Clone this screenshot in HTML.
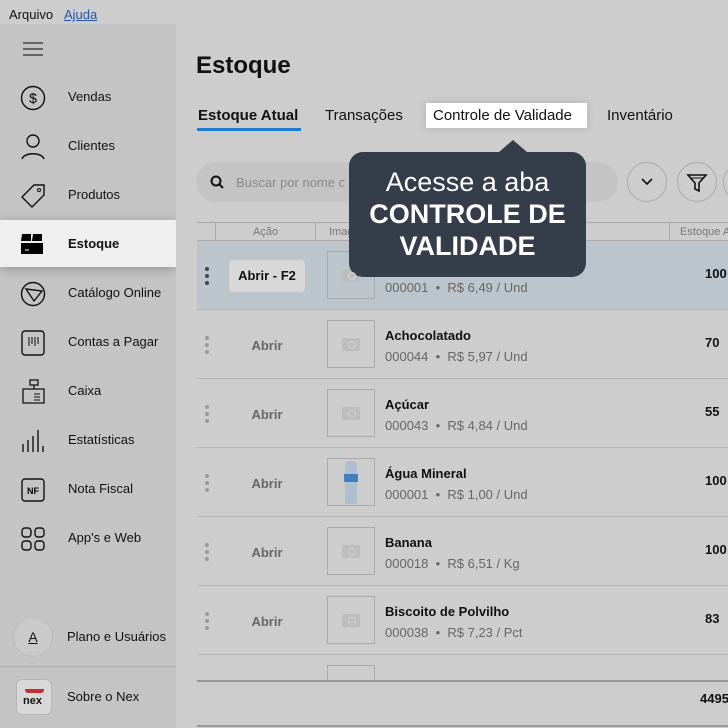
<!DOCTYPE html>
<html><head><meta charset="utf-8"><style>
*{box-sizing:border-box;margin:0;padding:0}
body{width:728px;height:728px;overflow:hidden;background:#cdcdcd;font-family:"Liberation Sans",sans-serif;color:#111;position:relative}
.abs{position:absolute}
.menubar{left:0;top:0;width:728px;height:24px;background:#cdcdcd;font-size:13px}
.side{left:0;top:24px;width:176px;height:704px;background:#c4c4c4}
.nav{position:absolute;left:0;width:176px;height:40px;font-size:13px}
.nav span{position:absolute;left:68px;top:12px}
.nav svg{position:absolute;left:20px;top:8px}
.hl{background:#efefef;box-shadow:0 2px 10px rgba(0,0,0,.25)}
.main{left:176px;top:24px;width:552px;height:704px;background:#cdcdcd}
.tab{position:absolute;top:107px;font-size:15px}
.row{position:absolute;left:197px;width:531px;height:69px;border-bottom:1px solid #b5b5b5}
.dots{position:absolute;left:8px;top:26px;width:4px}
.dots i{display:block;width:4px;height:4px;border-radius:2px;background:#9a9a9a;margin-bottom:3px}
.abrir{position:absolute;left:32px;top:20px;width:104px;height:32px;line-height:32px;text-align:center;font-size:13px;color:#666;font-weight:bold}
.img{position:absolute;left:130px;top:10px;width:48px;height:48px;border:1px solid #aaa}
.img.cam::after{content:"";position:absolute;left:14px;top:17px;width:18px;height:13px;border-radius:2px;background:#bdbdbd}
.img.cam::before{content:"";position:absolute;left:20px;top:20px;width:6px;height:6px;border-radius:50%;border:1.5px solid #d4d4d4;z-index:1}
.nm{position:absolute;left:188px;top:18px;font-size:13px;font-weight:bold}
.sub{position:absolute;left:188px;top:39px;font-size:13px;color:#666}
.qty{position:absolute;left:508px;top:25px;font-size:13px;font-weight:bold}
</style></head><body>
<div class="abs menubar"><span class="abs" style="left:9px;top:7px">Arquivo</span><span class="abs" style="left:64px;top:7px;color:#2a56a8;text-decoration:underline">Ajuda</span></div>
<div class="abs side">
<svg class="abs" style="left:23px;top:18px" width="20" height="14"><path d="M0 1h20M0 7h20M0 13h20" stroke="#444" stroke-width="1.5"/></svg>
<div class="nav" style="top:53px"><svg width="26" height="26"><circle cx="13" cy="13" r="11.5" fill="none" stroke="#111" stroke-width="1.4"/><text x="13" y="18" font-size="14" text-anchor="middle" font-family="Liberation Sans">$</text></svg><span>Vendas</span></div>
<div class="nav" style="top:102px"><svg width="26" height="26"><circle cx="13" cy="7" r="6" fill="none" stroke="#111" stroke-width="1.4"/><path d="M2 25c2-7 20-7 22 0" fill="none" stroke="#111" stroke-width="1.4"/></svg><span>Clientes</span></div>
<div class="nav" style="top:151px"><svg width="26" height="26"><path d="M2 14L14 2h10v10L12 24z" fill="none" stroke="#111" stroke-width="1.4"/><circle cx="19" cy="7" r="1.5" fill="none" stroke="#111"/></svg><span>Produtos</span></div>
<div class="nav hl" style="top:196px;height:47px"><svg style="top:12px" width="24" height="24"><path d="M2 2h9v7H1zM13 2h9v7h-10z M1 11h22v11H1z" fill="#000"/><path d="M5 18h4" stroke="#fff" stroke-width="1"/></svg><span style="top:16px;font-weight:bold">Estoque</span></div>
<div class="nav" style="top:249px"><svg width="26" height="26"><circle cx="13" cy="13" r="11.5" fill="none" stroke="#111" stroke-width="1.4"/><path d="M6 8l16 2-8 10z" fill="none" stroke="#111" stroke-width="1.4"/></svg><span>Catálogo Online</span></div>
<div class="nav" style="top:298px"><svg width="26" height="26"><rect x="2" y="1" width="22" height="24" rx="3" fill="none" stroke="#111" stroke-width="1.4"/><path d="M9 7v9M12 7v7M15 7v9M18 7v7" stroke="#111"/></svg><span>Contas a Pagar</span></div>
<div class="nav" style="top:347px"><svg width="26" height="26"><rect x="10" y="1" width="8" height="5" fill="none" stroke="#111" stroke-width="1.3"/><path d="M14 6v4M3 10h21v14H3z" fill="none" stroke="#111" stroke-width="1.3"/><path d="M14 15h6M14 18h6M14 21h6" stroke="#111"/></svg><span>Caixa</span></div>
<div class="nav" style="top:396px"><svg width="26" height="26"><path d="M3 24v-8M8 24v-12M13 24V8M18 24V2M23 24v-6" stroke="#111" stroke-width="1.4"/></svg><span>Estatísticas</span></div>
<div class="nav" style="top:445px"><svg width="26" height="26"><rect x="2" y="2" width="22" height="22" rx="3" fill="none" stroke="#111" stroke-width="1.4"/><text x="13" y="17" font-size="9" font-weight="bold" text-anchor="middle" font-family="Liberation Sans">NF</text></svg><span>Nota Fiscal</span></div>
<div class="nav" style="top:494px"><svg width="26" height="26"><rect x="2" y="2" width="9" height="9" rx="3" fill="none" stroke="#111" stroke-width="1.4"/><rect x="15" y="2" width="9" height="9" rx="3" fill="none" stroke="#111" stroke-width="1.4"/><rect x="2" y="15" width="9" height="9" rx="3" fill="none" stroke="#111" stroke-width="1.4"/><rect x="15" y="15" width="9" height="9" rx="3" fill="none" stroke="#111" stroke-width="1.4"/></svg><span>App's e Web</span></div>
<div class="abs" style="left:13px;top:593px;width:40px;height:40px;border-radius:20px;background:#cacaca;border:1px solid #bbb;text-align:center;line-height:38px;font-size:14px;text-decoration:underline">A</div>
<span class="abs" style="left:67px;top:605px;font-size:13px">Plano e Usuários</span>
<div class="abs" style="left:0;top:642px;width:176px;border-top:1px solid #aaa"></div>
<div class="abs" style="left:16px;top:655px;width:36px;height:36px;border-radius:6px;background:#d8d8d8;border:1px solid #b5b5b5"><div class="abs" style="left:8px;top:9px;width:19px;height:4px;background:#c4303a;border-radius:0 0 3px 3px"></div><span class="abs" style="left:6px;top:15px;font-size:11px;font-weight:bold">nex</span></div>
<span class="abs" style="left:67px;top:665px;font-size:13px">Sobre o Nex</span>
</div>
<div class="abs main"></div>
<div class="abs" style="left:196px;top:52px;font-size:24px;font-weight:bold">Estoque</div>
<div class="tab" style="left:198px;font-weight:bold">Estoque Atual</div>
<div class="abs" style="left:197px;top:128px;width:104px;height:3px;background:#1a7bd0"></div>
<div class="tab" style="left:325px">Transações</div>
<div class="abs" style="left:426px;top:103px;width:161px;height:25px;background:#fff;box-shadow:0 0 8px rgba(0,0,0,.15)"></div>
<div class="tab" style="left:433px">Controle de Validade</div>
<div class="tab" style="left:607px">Inventário</div>
<div class="abs" style="left:196px;top:162px;width:422px;height:40px;border-radius:20px;background:#c4c4c4"></div>
<svg class="abs" style="left:210px;top:175px" width="14" height="14"><circle cx="6" cy="6" r="4.5" fill="none" stroke="#111" stroke-width="2"/><path d="M9 9l4 4" stroke="#111" stroke-width="2"/></svg>
<span class="abs" style="left:236px;top:175px;font-size:13px;color:#888">Buscar por nome c</span>
<div class="abs" style="left:627px;top:162px;width:40px;height:40px;border-radius:20px;border:1px solid #aaa"></div>
<svg class="abs" style="left:640px;top:176px" width="14" height="10"><path d="M2 3l5 5 5-5" fill="none" stroke="#111" stroke-width="1.6"/></svg>
<div class="abs" style="left:677px;top:162px;width:40px;height:40px;border-radius:20px;border:1px solid #aaa"></div>
<svg class="abs" style="left:686px;top:172px" width="22" height="22"><path d="M2 3h18l-7 8v8l-4-2v-6z" fill="none" stroke="#111" stroke-width="1.6"/><path d="M4 6h14" stroke="#111"/></svg>
<div class="abs" style="left:723px;top:162px;width:40px;height:40px;border-radius:20px;border:1px solid #aaa"></div>
<div class="abs" style="left:197px;top:222px;width:531px;height:19px;border-top:1px solid #aaa;border-bottom:1px solid #aaa;font-size:11px;color:#777;white-space:nowrap;overflow:hidden">
<div class="abs" style="left:18px;top:0;height:18px;border-left:1px solid #aaa"></div>
<span class="abs" style="left:56px;top:3px">Ação</span>
<div class="abs" style="left:118px;top:0;height:18px;border-left:1px solid #aaa"></div>
<span class="abs" style="left:132px;top:3px">Imagem</span>
<div class="abs" style="left:472px;top:0;height:18px;border-left:1px solid #aaa"></div>
<span class="abs" style="left:483px;top:3px">Estoque A</span></div>

<div class="row" style="top:241px;background:#bcc5cb"><div class="dots"><i style="background:#444"></i><i style="background:#444"></i><i style="background:#444"></i></div><div class="abrir" style="left:32px;top:19px;width:76px;background:#d8d8d8;border-radius:4px;color:#111">Abrir - F2</div><div class="img cam"></div><div class="sub">000001 &nbsp;•&nbsp; R$ 6,49 / Und</div><div class="qty">100</div></div>
<div class="row" style="top:310px"><div class="dots"><i></i><i></i><i></i></div><div class="abrir" style="width:76px">Abrir</div><div class="img cam"></div><div class="nm">Achocolatado</div><div class="sub">000044 &nbsp;•&nbsp; R$ 5,97 / Und</div><div class="qty">70</div></div>
<div class="row" style="top:379px"><div class="dots"><i></i><i></i><i></i></div><div class="abrir" style="width:76px">Abrir</div><div class="img cam"></div><div class="nm">Açúcar</div><div class="sub">000043 &nbsp;•&nbsp; R$ 4,84 / Und</div><div class="qty">55</div></div>
<div class="row" style="top:448px"><div class="dots"><i></i><i></i><i></i></div><div class="abrir" style="width:76px">Abrir</div><div class="img"><div class="abs" style="left:17px;top:2px;width:12px;height:43px;border-radius:4px 4px 2px 2px;background:#aebfd0"></div><div class="abs" style="left:16px;top:15px;width:14px;height:8px;background:#3f7fc0"></div></div><div class="nm">Água Mineral</div><div class="sub">000001 &nbsp;•&nbsp; R$ 1,00 / Und</div><div class="qty">100</div></div>
<div class="row" style="top:517px"><div class="dots"><i></i><i></i><i></i></div><div class="abrir" style="width:76px">Abrir</div><div class="img cam"></div><div class="nm">Banana</div><div class="sub">000018 &nbsp;•&nbsp; R$ 6,51 / Kg</div><div class="qty">100</div></div>
<div class="row" style="top:586px"><div class="dots"><i></i><i></i><i></i></div><div class="abrir" style="width:76px">Abrir</div><div class="img cam"></div><div class="nm">Biscoito de Polvilho</div><div class="sub">000038 &nbsp;•&nbsp; R$ 7,23 / Pct</div><div class="qty">83</div></div>
<div class="abs" style="left:327px;top:665px;width:48px;height:15px;border:1px solid #aaa;border-bottom:none"></div>
<div class="abs" style="left:197px;top:680px;width:531px;height:47px;border-top:2px solid #999;border-bottom:2px solid #999"></div>
<span class="abs" style="left:700px;top:691px;font-size:13px;font-weight:bold">4495</span>

<svg class="abs" style="left:349px;top:140px" width="237" height="138"><path d="M14 12H150L164 0L178 12H223a14 14 0 0 1 14 14V123a14 14 0 0 1-14 14H14A14 14 0 0 1 0 123V26A14 14 0 0 1 14 12z" fill="#353d4a"/></svg>
<div class="abs" style="left:349px;top:166px;width:237px;text-align:center;color:#fff;font-size:27px;line-height:32px">Acesse a aba<br><b>CONTROLE DE<br>VALIDADE</b></div>
</body></html>
